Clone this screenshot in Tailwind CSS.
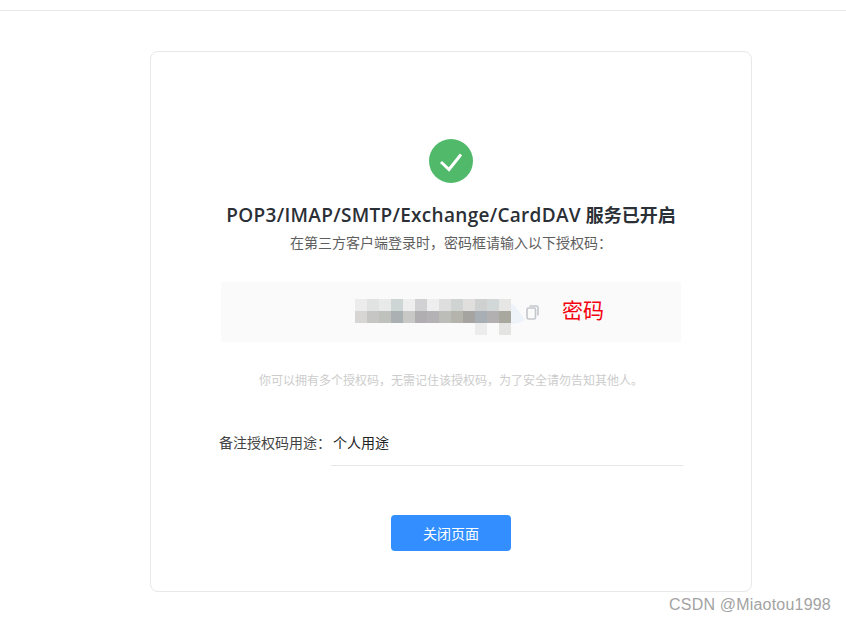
<!DOCTYPE html>
<html lang="zh-CN">

<head>
    <meta charset="UTF-8" />
    <title>服务已开启</title>
    <script src="https://cdn.jsdelivr.net/npm/@tailwindcss/browser@4"></script>
</head>

<body class="relative h-[620px] overflow-hidden bg-white font-['Open_Sans','Noto_Sans_CJK_SC',sans-serif]">
    <!-- Top bar -->
    <div class="h-[11px] border-b border-[#e8e8e8]"></div>

    <!-- Card -->
    <div class="ml-[150px] mt-[40px] flex h-[541px] w-[602px] flex-col items-center rounded-lg border border-[#e8e8e8] pt-[87px]">
        <div class="flex h-11 w-11 items-center justify-center rounded-full bg-[#50b96a]">
            <svg class="h-11 w-11" viewBox="0 0 44 44" fill="none">
                <path d="M12 23 L20 30.5 L32 15.5" stroke="#fff" stroke-width="3" />
            </svg>
        </div>

        <h1 class="mt-[19px] h-[26px] text-[18px] leading-[26px] font-semibold whitespace-nowrap text-[#2b2f36]"><span class="text-[19px] tracking-[0.3px]">POP3/IMAP/SMTP/Exchange/CardDAV</span> 服务已开启</h1>
        <p class="mt-[5px] h-[20px] text-[14px] leading-[20px] whitespace-nowrap text-[#5e5e5e]">在第三方客户端登录时，密码框请输入以下授权码：</p>

        <!-- Code box -->
        <div class="mt-[29px] flex h-[60px] w-[460px] items-start bg-[#fafafa] pl-[134px] pt-[17px]">
            <div class="relative grid w-[156px] grid-cols-13 auto-rows-[12px]">
                <i class="bg-[#ececec]"></i><i class="bg-[#e1e3e2]"></i><i class="bg-[#e8eaea]"></i><i class="bg-[#ced5d5]"></i><i class="bg-[#eeeeee]"></i><i class="bg-[#d1d0d2]"></i><i class="bg-[#efeeef]"></i><i class="bg-[#dedede]"></i><i class="bg-[#cfd4d3]"></i><i class="bg-[#e0dfde]"></i><i class="bg-[#cfd0d0]"></i><i class="bg-[#d2d7d8]"></i><i class="bg-[#e6e6e4]"></i>
                <i class="bg-[#d8d6d5]"></i><i class="bg-[#c6c6c5]"></i><i class="bg-[#bfc1bd]"></i><i class="bg-[#abb0b2]"></i><i class="bg-[#c8c8c6]"></i><i class="bg-[#b0aeb1]"></i><i class="bg-[#b4b2b4]"></i><i class="bg-[#bcbcb9]"></i><i class="bg-[#b4b4ad]"></i><i class="bg-[#a5a4a0]"></i><i class="bg-[#a7aeb4]"></i><i class="bg-[#b2b0b0]"></i><i class="bg-[#a9a89f]"></i>
                <i></i><i></i><i></i><i></i><i></i><i></i><i></i><i></i><i></i><i></i><i class="bg-[#ececec]"></i><i></i><i class="bg-[#e4e4e2]"></i>
                <svg class="absolute left-[156px] top-0 h-[30px] w-[16px]" viewBox="0 0 16 30">
                    <path d="M0 4 Q6 8 14 21 Q8 25 0 25 Z" fill="#eef3fa" />
                </svg>
            </div>
            <svg class="ml-[15px] mt-[6px] h-[15px] w-[13px]" viewBox="0 0 13 15" fill="none" stroke="#c3c6cb" stroke-width="1.6">
                <rect x="1" y="3" width="8.5" height="11" rx="1.5" />
                <path d="M3.5 1 H10.5 Q12 1 12 2.5 V10.5" />
            </svg>
            <span class="ml-[23px] mt-[-4px] text-[21px] leading-[30px] whitespace-nowrap text-[#f5000f]">密码</span>
        </div>

        <p class="mt-[30px] h-[18px] text-[12px] leading-[18px] whitespace-nowrap text-[#cccccc]">你可以拥有多个授权码，无需记住该授权码，为了安全请勿告知其他人。</p>

        <!-- Note row -->
        <div class="mt-[32px] flex w-[464px] items-start">
            <label class="w-[112px] pt-[11px] text-[14px] leading-[20px] whitespace-nowrap text-[#444444]">备注授权码用途：</label>
            <div class="h-[44px] w-[352px] border-b border-[#e6e6ea] pl-[2px] pt-[11px] text-[14px] leading-[20px] text-[#222222]">个人用途</div>
        </div>

        <button class="mt-[49px] h-9 w-[120px] rounded bg-[#338fff] text-[14px] text-white">关闭页面</button>
    </div>

    <!-- Watermark -->
    <span class="absolute left-[669px] top-[596px] font-['Liberation_Sans',sans-serif] text-[16px] leading-[18px] tracking-[0.2px] whitespace-nowrap text-[#a3a3a3]">CSDN @Miaotou1998</span>
</body>

</html>
